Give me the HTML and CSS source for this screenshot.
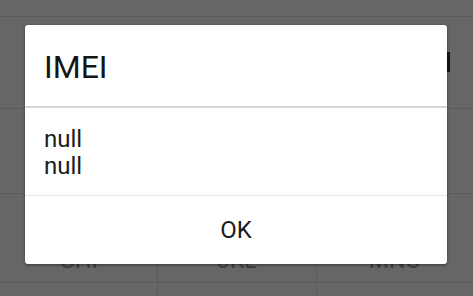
FILE: index.html
```html
<!DOCTYPE html>
<html>
<head>
<meta charset="utf-8">
<link rel="stylesheet" href="styles.css">
</head>
<body>
<div class="screen">
  <div class="row r1"></div>
  <div class="row r2"><span class="cursor"></span></div>
  <div class="row r3 keys">
    <div class="key"></div><div class="key"></div><div class="key"></div>
  </div>
  <div class="row r4 keys">
    <div class="key"><span class="letters">GHI</span></div>
    <div class="key"><span class="letters">JKL</span></div>
    <div class="key"><span class="letters">MNO</span></div>
  </div>
  <div class="row r5 keys">
    <div class="key"></div><div class="key"></div><div class="key"></div>
  </div>
</div>
<div class="dialog">
  <div class="title">IMEI</div>
  <div class="message">null<br>null</div>
  <div class="actions"><span class="btn">OK</span></div>
</div>
</body>
</html>
```
FILE: styles.css
```css
html, body {
  margin: 0;
  padding: 0;
}
body {
  width: 473px;
  height: 296px;
  overflow: hidden;
  background: #666666;
  font-family: Roboto, "Noto Sans", sans-serif;
  position: relative;
}
.screen {
  display: flex;
  flex-direction: column;
  height: 296px;
}
.row {
  border-bottom: 1px solid #5b5b5b;
  flex: none;
}
.r1 { height: 16px; }
.r2 {
  height: 91px;
  display: flex;
  align-items: center;
  justify-content: flex-end;
  padding-right: 23px;
}
.cursor {
  width: 3px;
  height: 20px;
  background: #151515;
  margin-top: -1px;
}
.r3 { height: 84px; }
.r4 { height: 88px; }
.r5 { flex: 1; border-bottom: none; }
.keys {
  display: grid;
  grid-template-columns: 157px 159px 1fr;
}
.key {
  display: flex;
  justify-content: center;
  align-items: flex-start;
}
.key + .key {
  border-left: 1px solid #5b5b5b;
}
.letters {
  font-size: 23px;
  line-height: 28px;
  color: #3e3e3e;
  padding-top: 53px;
}
.dialog {
  position: absolute;
  left: 25px;
  top: 25px;
  width: 422px;
  height: 239px;
  background: #ffffff;
  border-radius: 3px;
  box-shadow: 0 1px 3px rgba(0, 0, 0, 0.45);
  display: flex;
  flex-direction: column;
}
.title {
  font-size: 32px;
  line-height: 38px;
  color: #141414;
  padding: 23px 19px 20px;
  border-bottom: 2px solid #d6d6d6;
}
.message {
  font-size: 24px;
  line-height: 27px;
  color: #1c1c1c;
  padding: 18px 19px 15px;
  border-bottom: 1px solid #e6e6e6;
}
.actions {
  height: 68px;
  display: flex;
  align-items: center;
  justify-content: center;
}
.btn {
  font-size: 24px;
  line-height: 28px;
  color: #1c1c1c;
}
```
